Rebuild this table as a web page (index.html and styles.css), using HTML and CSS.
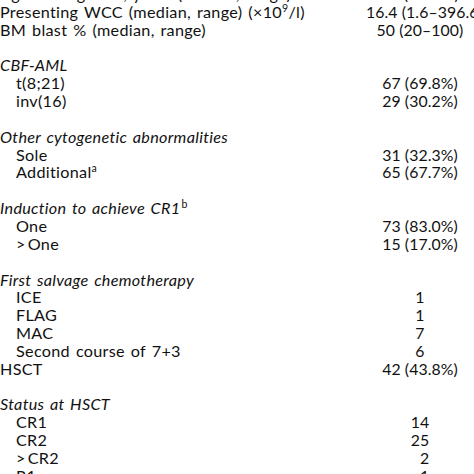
FILE: index.html
```html
<!DOCTYPE html>
<html>
<head>
<meta charset="utf-8">
<link rel="stylesheet" href="styles.css">
</head>
<body>
<div class="table">
  <div class="row"><div class="label">Age at diagnosis, years (median, range)</div><div class="val">47 (18–78)</div></div>
  <div class="row"><div class="label">Presenting WCC (median, range) (×10<sup>9</sup>/l)</div><div class="val">16.4 (1.6–396.6)</div></div>
  <div class="row"><div class="label">BM blast % (median, range)</div><div class="val">50 (20–100)</div></div>
  <div class="row blank"></div>
  <div class="row"><div class="label head">CBF-AML</div><div class="val"></div></div>
  <div class="row"><div class="label sub">t(8;21)</div><div class="val">67 (69.8%)</div></div>
  <div class="row"><div class="label sub">inv(16)</div><div class="val">29 (30.2%)</div></div>
  <div class="row blank"></div>
  <div class="row"><div class="label head">Other cytogenetic abnormalities</div><div class="val"></div></div>
  <div class="row"><div class="label sub">Sole</div><div class="val">31 (32.3%)</div></div>
  <div class="row"><div class="label sub">Additional<sup>a</sup></div><div class="val">65 (67.7%)</div></div>
  <div class="row blank"></div>
  <div class="row"><div class="label head">Induction to achieve CR1<sup class="up">b</sup></div><div class="val"></div></div>
  <div class="row"><div class="label sub">One</div><div class="val">73 (83.0%)</div></div>
  <div class="row"><div class="label sub"><span class="gt">&gt;</span>One</div><div class="val">15 (17.0%)</div></div>
  <div class="row blank"></div>
  <div class="row"><div class="label head">First salvage chemotherapy</div><div class="val"></div></div>
  <div class="row"><div class="label sub">ICE</div><div class="val num">1</div></div>
  <div class="row"><div class="label sub">FLAG</div><div class="val num">1</div></div>
  <div class="row"><div class="label sub">MAC</div><div class="val num">7</div></div>
  <div class="row"><div class="label sub">Second course of 7+3</div><div class="val num">6</div></div>
  <div class="row"><div class="label">HSCT</div><div class="val">42 (43.8%)</div></div>
  <div class="row blank"></div>
  <div class="row"><div class="label head">Status at HSCT</div><div class="val"></div></div>
  <div class="row"><div class="label sub">CR1</div><div class="val num2">14</div></div>
  <div class="row"><div class="label sub">CR2</div><div class="val num2">25</div></div>
  <div class="row"><div class="label sub"><span class="gt">&gt;</span>CR2</div><div class="val num2">&#8199;2</div></div>
  <div class="row"><div class="label sub">R1</div><div class="val num2">&#8199;1</div></div>
</div>
</body>
</html>
```
FILE: styles.css
```css
html, body {
  margin: 0;
  padding: 0;
  background: #ffffff;
}
body {
  width: 474px;
  height: 474px;
  overflow: hidden;
  font-family: Lato, "Open Sans", sans-serif;
  font-size: 16.2px;
  color: #111111;
}
.table {
  display: flex;
  flex-direction: column;
  margin-top: -15px;
}
.row {
  display: grid;
  grid-template-columns: 366px 108px;
  height: 17.85px;
  line-height: 17.85px;
  white-space: nowrap;
}
.label {
  padding-left: 0;
  letter-spacing: 0.3px;
  word-spacing: 1.5px;
}
.label.sub {
  padding-left: 16px;
}
.label.head {
  font-style: italic;
}
.val {
  text-align: center;
  font-size: 15.8px;
  letter-spacing: 0.1px;
}
sup {
  font-size: 10.5px;
  line-height: 0;
  vertical-align: 6px;
}
sup.up {
  font-style: normal;
  margin-left: 1px;
}
.gt {
  margin-right: 2px;
}
```
